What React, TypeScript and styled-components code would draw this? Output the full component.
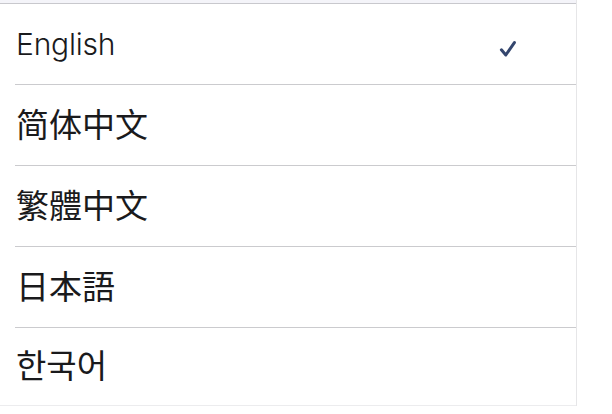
import React from "react";
import styled, { createGlobalStyle } from "styled-components";

interface Language {
  code: string;
  label: string;
  cjk: string;
}

const languages: Language[] = [
  { code: "en", label: "English", cjk: "Noto Sans CJK SC" },
  { code: "zh-Hans", label: "简体中文", cjk: "Noto Sans CJK SC" },
  { code: "zh-Hant", label: "繁體中文", cjk: "Noto Sans CJK TC" },
  { code: "ja", label: "日本語", cjk: "Noto Sans CJK JP" },
  { code: "ko", label: "한국어", cjk: "Noto Sans CJK KR" },
];

const selected = "en";

const GlobalStyle = createGlobalStyle`
  html, body {
    margin: 0;
    padding: 0;
    background: #ffffff;
  }
`;

const App: React.FC = () => (
  <>
    <GlobalStyle />
    <Panel>
      <TopStrip />
      <List>
        {languages.map((lang, i) => (
          <Row key={lang.code} $last={i === languages.length - 1}>
            <Label lang={lang.code} $cjk={lang.cjk} $latin={lang.code === "en"}>
              {lang.label}
            </Label>
            {lang.code === selected && (
              <Check viewBox="0 0 18 18" aria-hidden="true">
                <polyline points="2.4,9.8 6.8,15 15.4,2.6" />
              </Check>
            )}
          </Row>
        ))}
      </List>
    </Panel>
  </>
);

const Panel = styled.div`
  width: 576px;
  height: 406px;
  border-right: 1px solid #e6e6e8;
  background: #ffffff;
  display: flex;
  flex-direction: column;
`;

const TopStrip = styled.div`
  height: 4px;
  background: #f4f4f9;
  border-bottom: 1px solid #c8c8cd;
`;

const List = styled.ul`
  list-style: none;
  margin: 0;
  padding: 0 0 0 15px;
  display: flex;
  flex-direction: column;
`;

const Row = styled.li<{ $last: boolean }>`
  display: flex;
  align-items: center;
  justify-content: space-between;
  height: ${({ $last }) => ($last ? "77px" : "80px")};
  padding: 0 59px 0 1px;
  border-bottom: 1px solid ${({ $last }) => ($last ? "#ececee" : "#cbcbce")};
  margin-left: ${({ $last }) => ($last ? "-15px" : "0")};
  padding-left: ${({ $last }) => ($last ? "16px" : "1px")};
`;

const Label = styled.span<{ $cjk: string; $latin: boolean }>`
  font-family: ${({ $latin }) => ($latin ? "Inter" : '"Liberation Sans"')},
    ${({ $cjk }) => `"${$cjk}"`}, sans-serif;
  font-size: ${({ $latin }) => ($latin ? "30px" : "33px")};
  font-weight: ${({ $latin }) => ($latin ? 300 : 400)};
  letter-spacing: ${({ $latin }) => ($latin ? "-0.2px" : "0")};
  color: #1a1a1c;
  line-height: 1;
`;

const Check = styled.svg`
  width: 18px;
  height: 18px;
  fill: none;
  stroke: #34466e;
  stroke-width: 3;
  stroke-linecap: round;
  stroke-linejoin: round;
  margin-top: 9px;
`;

export default App;
